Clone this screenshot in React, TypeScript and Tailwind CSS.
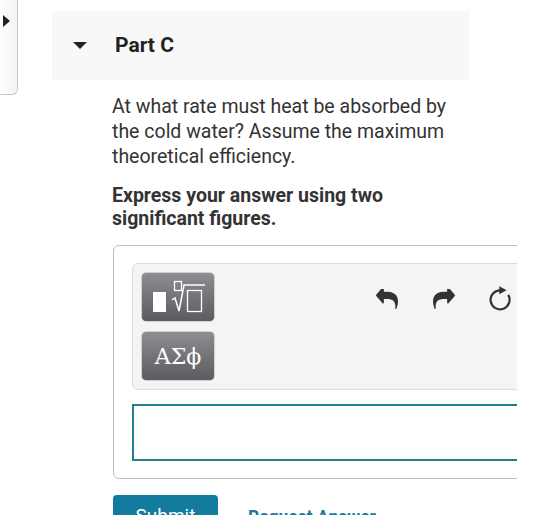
const font = { fontFamily: 'Roboto, "Liberation Sans", sans-serif' }

const MathButton = ({ children }: { children: React.ReactNode }) => (
  <div className="flex h-[50px] w-[74px] items-center justify-center rounded-[5px] border border-[#d0d0d0] bg-gradient-to-b from-[#8e8e92] to-[#5c5c60] text-white">
    {children}
  </div>
)

const RadicalIcon = () => (
  <svg width="58" height="36" viewBox="0 0 58 36">
    <rect x="4" y="13" width="13" height="20" fill="#fff" />
    <rect x="25.5" y="2.5" width="7" height="9" fill="none" stroke="#fff" strokeWidth="1.3" />
    <path d="M23 21 L26 19 L30 32 L35 6 L56 6" fill="none" stroke="#fff" strokeWidth="1.5" />
    <rect x="38.5" y="11.5" width="14" height="21" fill="none" stroke="#fff" strokeWidth="1.3" />
  </svg>
)

const replyPath =
  'M1792 1120q0 166-127 451-3 7-10.5 24t-13.5 30-13 22q-12 17-28 17-15 0-23.5-10t-8.5-25q0-9 2.5-26.5t2.5-23.5q5-68 5-123 0-101-17.5-181t-48.5-138.5-80-101-105.5-69.5-133-42.5-154-21.5-175.5-6h-224v256q0 26-19 45t-45 19-45-19l-512-512q-19-19-19-45t19-45l512-512q19-19 45-19t45 19 19 45v256h224q713 0 875 403 53 134 53 333z'

const ArrowIcon = ({ flip }: { flip?: boolean }) => (
  <svg width="22" height="20" viewBox="0 200 1792 1390" preserveAspectRatio="none">
    <path d={replyPath} fill="#333" transform={flip ? 'translate(1792 0) scale(-1 1)' : undefined} />
  </svg>
)

// clockwise reset: gap at the top, arrowhead pointing right
const ResetIcon = () => (
  <svg width="24" height="25" viewBox="0 0 24 25">
    <path d="M20.2 8.9 A9.5 9.5 0 1 1 12 4.3" fill="none" stroke="#333" strokeWidth="2.2" />
    <path d="M11.3 0.3 L18.6 4.3 L11.3 8.3 Z" fill="#333" />
  </svg>
)

export default function App() {
  return (
    <div className="relative h-[515px] w-[540px] overflow-hidden bg-white text-[#222]" style={font}>
      {/* side tab */}
      <div className="absolute left-0 top-0 h-[95px] w-[18px] rounded-br-[6px] border-b border-r border-[#c8c8c8] bg-gradient-to-r from-white to-[#f3f3f3]">
        <div className="ml-[3px] mt-[15px] h-0 w-0 border-y-[6px] border-l-[7px] border-y-transparent border-l-[#222]" />
      </div>

      <div className="w-[517px] overflow-hidden pl-[52px] pt-[11px]">
        <div className="flex h-[69px] w-[417px] items-center bg-[#f8f8f8] pl-[21px]">
          <div className="h-0 w-0 border-x-[7.5px] border-t-[7px] border-x-transparent border-t-[#222]" />
          <span className="ml-[28px] text-[21px] font-bold">Part C</span>
        </div>

        <div className="pl-[60px]">
          <p className="mt-[14px] text-[19.5px] leading-[25px] text-[#333]">
            At what rate must heat be absorbed by
            <br />
            the cold water? Assume the maximum
            <br />
            theoretical efficiency.
          </p>
          <p className="mt-[15px] text-[19.5px] font-bold leading-[23px] text-[#333]">
            Express your answer using two
            <br />
            significant figures.
          </p>

          <div className="ml-px mt-[15px] w-[440px] rounded-[6px] border border-[#bdbdbd] pb-[17px] pl-[18px] pt-[17px]">
            <div className="flex h-[127px] items-start rounded-[6px] border border-[#dcdcdc] bg-[#f4f4f4] p-[8px]">
              <div className="flex flex-col gap-[9px]">
                <MathButton>
                  <RadicalIcon />
                </MathButton>
                <MathButton>
                  <span className="text-[22px]" style={{ fontFamily: '"DejaVu Serif", "Liberation Serif", serif' }}>
                    ΑΣϕ
                  </span>
                </MathButton>
              </div>
              <div className="ml-[161px] mt-[14px] flex items-center">
                <ArrowIcon />
                <div className="ml-[35px]">
                  <ArrowIcon flip />
                </div>
                <div className="ml-[33px]">
                  <ResetIcon />
                </div>
              </div>
            </div>
            <div className="mt-[14px] h-[57px] border-2 border-[#217f8e] bg-white" />
          </div>

          <div className="mt-[16px] flex items-start">
            <div className="ml-px flex h-[38px] w-[105px] justify-center rounded-t-[4px] bg-[#137b9e] pt-[7px] text-[19px] text-white">
              Submit
            </div>
            <span className="ml-[30px] pt-[9px] text-[17.5px] font-bold text-[#1a7aa3]">Request Answer</span>
          </div>
        </div>
      </div>
    </div>
  )
}
